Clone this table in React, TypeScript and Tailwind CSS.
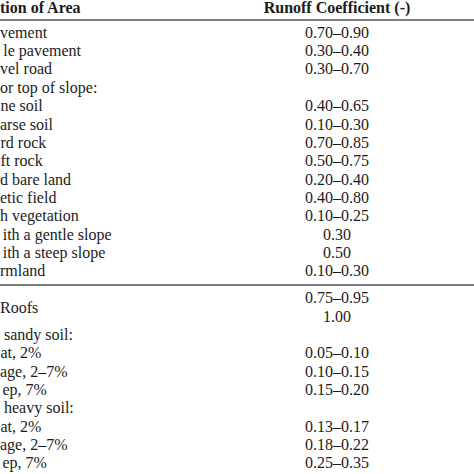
const font = { fontFamily: '"Liberation Serif", "Times New Roman", serif' };

type Row = { label: string; shift: string; values: string[] };

const top: Row[] = [
  { label: "vement", shift: "ml-0", values: ["0.70–0.90"] },
  { label: "le pavement", shift: "ml-[3.3px]", values: ["0.30–0.40"] },
  { label: "vel road", shift: "ml-0", values: ["0.30–0.70"] },
  { label: "or top of slope:", shift: "ml-0", values: [""] },
  { label: "ne soil", shift: "ml-[0.5px]", values: ["0.40–0.65"] },
  { label: "arse soil", shift: "ml-0", values: ["0.10–0.30"] },
  { label: "rd rock", shift: "ml-[0.5px]", values: ["0.70–0.85"] },
  { label: "ft rock", shift: "ml-[0.5px]", values: ["0.50–0.75"] },
  { label: "d bare land", shift: "ml-0", values: ["0.20–0.40"] },
  { label: "etic field", shift: "ml-0", values: ["0.40–0.80"] },
  { label: "h vegetation", shift: "ml-0", values: ["0.10–0.25"] },
  { label: "ith a gentle slope", shift: "ml-[2.7px]", values: ["0.30"] },
  { label: "ith a steep slope", shift: "ml-[2.7px]", values: ["0.50"] },
  { label: "rmland", shift: "ml-0", values: ["0.10–0.30"] },
];

const bottom: Row[] = [
  { label: "Roofs", shift: "ml-0", values: ["0.75–0.95", "1.00"] },
  { label: "sandy soil:", shift: "ml-[4px]", values: [""] },
  { label: "at, 2%", shift: "ml-[0.5px]", values: ["0.05–0.10"] },
  { label: "age, 2–7%", shift: "ml-0", values: ["0.10–0.15"] },
  { label: "ep, 7%", shift: "ml-[2.5px]", values: ["0.15–0.20"] },
  { label: "heavy soil:", shift: "ml-[4px]", values: [""] },
  { label: "at, 2%", shift: "ml-[0.5px]", values: ["0.13–0.17"] },
  { label: "age, 2–7%", shift: "ml-0", values: ["0.18–0.22"] },
  { label: "ep, 7%", shift: "ml-[2.5px]", values: ["0.25–0.35"] },
];

const TableRow = ({ row }: { row: Row }) => (
  <div className="grid grid-cols-[200px_274px] items-center">
    <div className="overflow-hidden whitespace-nowrap">
      <span className={`inline-block ${row.shift}`}>{row.label}</span>
    </div>
    <div className="flex flex-col text-center">
      {row.values.map((v, i) => (
        <span key={i} className="h-[18.35px]">
          {v}
        </span>
      ))}
    </div>
  </div>
);

const Rule = () => <div className="h-[1.5px] bg-[#7c7c7c]" />;

export default function App() {
  return (
    <div
      className="w-[474px] h-[474px] overflow-hidden bg-white text-[16px] leading-[18.35px] text-[#1c1c1c]"
      style={font}
    >
      <div className="grid grid-cols-[200px_274px] h-[16px] font-bold leading-[16px]">
        <div className="overflow-hidden whitespace-nowrap">tion of Area</div>
        <div className="text-center">Runoff Coefficient (-)</div>
      </div>
      <div className="mt-[3.3px]">
        <Rule />
      </div>
      <div className="pt-[3px]">
        {top.map((r, i) => (
          <TableRow key={i} row={r} />
        ))}
      </div>
      <div className="mt-[3.6px]">
        <Rule />
      </div>
      <div className="pt-[3.7px]">
        {bottom.map((r, i) => (
          <TableRow key={i} row={r} />
        ))}
      </div>
    </div>
  );
}
